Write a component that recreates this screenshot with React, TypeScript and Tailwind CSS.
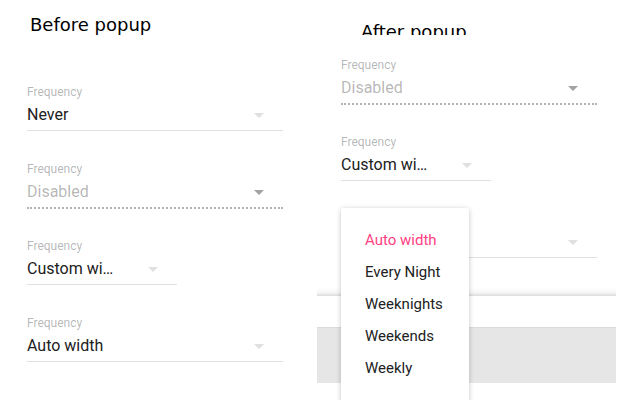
import React from "react";

type FieldProps = {
  value: string;
  width?: string;
  disabled?: boolean;
};

function Arrow({ disabled }: { disabled?: boolean }) {
  return (
    <svg
      width="10"
      height="5"
      viewBox="0 0 10 5"
      className="absolute right-[19px] top-[10px]"
    >
      <path d="M0 0h10L5 5z" fill={disabled ? "#a3a3a3" : "#e0e0e0"} />
    </svg>
  );
}

function SelectField({ value, width = "w-[256px]", disabled }: FieldProps) {
  return (
    <div className="h-[77px]">
      <div className={width}>
        <div className="text-xs leading-4 text-black/30">Frequency</div>
        <div
          className={
            "relative mt-[3px] pb-[3px] " +
            (disabled
              ? "border-b-2 border-dotted border-black/30"
              : "border-b border-[#e0e0e0]")
          }
        >
          <div
            className={
              "truncate pr-[56px] text-base leading-6 " +
              (disabled ? "text-black/30" : "text-[#212121]")
            }
          >
            {value}
          </div>
          <Arrow disabled={disabled} />
        </div>
      </div>
    </div>
  );
}

const items = ["Auto width", "Every Night", "Weeknights", "Weekends", "Weekly"];

export default function App() {
  return (
    <div className="relative flex h-[400px] w-[640px] overflow-hidden bg-white font-['Roboto',sans-serif]">
      {/* before */}
      <div className="w-[317px] pl-[27px]">
        <h3 className="pl-[3px] pt-[13px] font-['DejaVu_Sans',sans-serif] text-[18px] leading-6 text-black">
          Before popup
        </h3>
        <div className="mt-[47px]">
          <SelectField value="Never" />
          <SelectField value="Disabled" disabled />
          <SelectField value="Custom width" width="w-[150px]" />
          <SelectField value="Auto width" />
        </div>
      </div>

      {/* after */}
      <div className="w-[299px]">
        <div className="h-[35px] overflow-hidden pl-[44px]">
          <h3 className="pt-[20px] font-['DejaVu_Sans',sans-serif] text-[18px] leading-6 text-black">
            After popup
          </h3>
        </div>
        <div className="mt-[22px] pl-[24px]">
          <SelectField value="Disabled" disabled />
          <SelectField value="Custom width" width="w-[150px]" />
          <SelectField value="Auto width" />
        </div>
        <div className="h-[8px] bg-[linear-gradient(to_bottom,rgba(0,0,0,0),rgba(0,0,0,0.04)_60%,rgba(0,0,0,0.14))]" />
        <div className="mt-[31px] h-[56px] border-t border-[#dcdcdc] bg-[#e6e6e6]" />
      </div>

      {/* popup menu */}
      <div className="absolute left-[341px] top-[208px] h-[210px] w-[128px] rounded-[2px] bg-white pt-[16px] shadow-[0_1px_6px_rgba(0,0,0,0.12),0_1px_4px_rgba(0,0,0,0.12)]">
        {items.map((item, i) => (
          <div
            key={item}
            className={
              "h-8 pl-6 text-[15px] leading-8 whitespace-nowrap " +
              (i === 0 ? "text-[#ff4081]" : "text-[#212121]")
            }
          >
            {item}
          </div>
        ))}
      </div>
    </div>
  );
}
